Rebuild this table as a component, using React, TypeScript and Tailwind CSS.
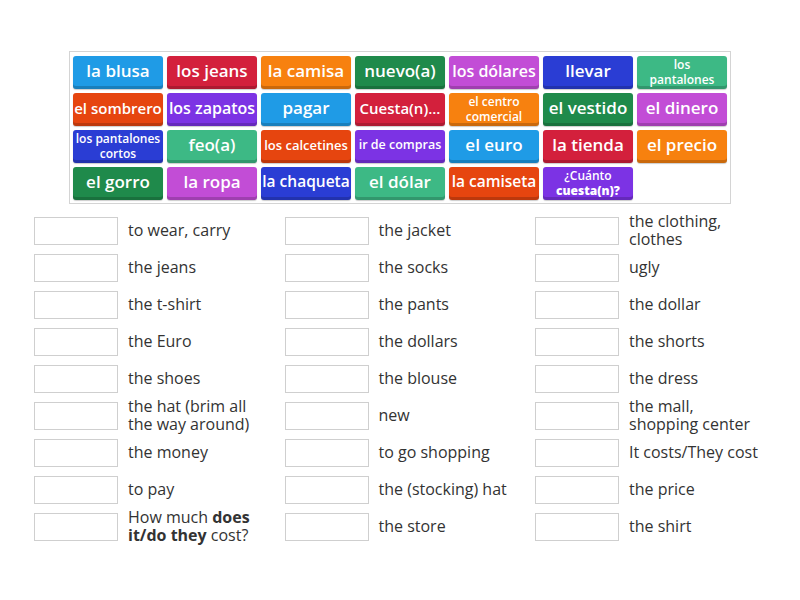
const palette = [
  'bg-[#1f9be6]',
  'bg-[#d3203c]',
  'bg-[#f7810f]',
  'bg-[#1f8a4b]',
  'bg-[#c24dd6]',
  'bg-[#2a3dd4]',
  'bg-[#3db985]',
  'bg-[#e6450f]',
  'bg-[#7c33e4]',
];

type Tile = { label: React.ReactNode; size: string };

const two = 'text-[12px] leading-[14px] pb-[1px]';

const tiles: Tile[] = [
  { label: 'la blusa', size: 'text-[17px] pb-[3px]' },
  { label: 'los jeans', size: 'text-[17px] pb-[3px]' },
  { label: 'la camisa', size: 'text-[17px] pb-[3px]' },
  { label: 'nuevo(a)', size: 'text-[17px] pb-[3px]' },
  { label: 'los dólares', size: 'text-[16px] pb-[3px]' },
  { label: 'llevar', size: 'text-[17px] pb-[3px]' },
  { label: <>los<br />pantalones</>, size: two },
  { label: 'el sombrero', size: 'text-[15px] pb-[3px]' },
  { label: 'los zapatos', size: 'text-[16px] pb-[3px]' },
  { label: 'pagar', size: 'text-[17px] pb-[3px]' },
  { label: 'Cuesta(n)...', size: 'text-[15px] pb-[3px]' },
  { label: <>el centro<br />comercial</>, size: two },
  { label: 'el vestido', size: 'text-[17px] pb-[3px]' },
  { label: 'el dinero', size: 'text-[17px] pb-[3px]' },
  { label: <>los pantalones<br />cortos</>, size: two },
  { label: 'feo(a)', size: 'text-[17px] pb-[3px]' },
  { label: 'los calcetines', size: 'text-[13px] pb-[3px]' },
  { label: 'ir de compras', size: 'text-[12.5px] pb-[3px]' },
  { label: 'el euro', size: 'text-[17px] pb-[3px]' },
  { label: 'la tienda', size: 'text-[17px] pb-[3px]' },
  { label: 'el precio', size: 'text-[17px] pb-[3px]' },
  { label: 'el gorro', size: 'text-[17px] pb-[3px]' },
  { label: 'la ropa', size: 'text-[17px] pb-[3px]' },
  { label: 'la chaqueta', size: 'text-[15.5px] pb-[3px]' },
  { label: 'el dólar', size: 'text-[17px] pb-[3px]' },
  { label: 'la camiseta', size: 'text-[15.5px] pb-[3px]' },
  {
    label: (
      <>
        ¿Cuánto
        <br />
        <span className="font-extrabold">cuesta(n)?</span>
      </>
    ),
    size: two,
  },
];

const columns: React.ReactNode[][] = [
  [
    'to wear, carry',
    'the jeans',
    'the t-shirt',
    'the Euro',
    'the shoes',
    <>the hat (brim all<br />the way around)</>,
    'the money',
    'to pay',
    <>How much <b className="font-bold">does</b><br /><b className="font-bold">it/do they</b> cost?</>,
  ],
  [
    'the jacket',
    'the socks',
    'the pants',
    'the dollars',
    'the blouse',
    'new',
    'to go shopping',
    'the (stocking) hat',
    'the store',
  ],
  [
    <>the clothing,<br />clothes</>,
    'ugly',
    'the dollar',
    'the shorts',
    'the dress',
    <>the mall,<br />shopping center</>,
    'It costs/They cost',
    'the price',
    'the shirt',
  ],
];

export default function App() {
  return (
    <div className="w-[800px] h-[600px] bg-white font-['Open_Sans',sans-serif] relative overflow-hidden">
      <div className="pt-[51px] pl-[69px]">
        <div className="w-[662px] border border-[#d4d4d4] px-[3px] pt-[4px] pb-[3px]">
          <div className="grid grid-cols-7 gap-x-[4px] gap-y-[4px]">
            {tiles.map((t, i) => (
              <div
                key={i}
                className={`${palette[i % 9]} h-[33px] rounded-[3px] flex items-center justify-center text-center text-white font-semibold whitespace-nowrap shadow-[inset_0_-3px_0_rgba(0,0,0,0.18),0_1px_1px_rgba(0,0,0,0.2)] ${t.size}`}
              >
                <span className="leading-tight">{t.label}</span>
              </div>
            ))}
          </div>
        </div>
      </div>

      <div className="flex pl-[34px] pt-[13px]">
        {columns.map((col, c) => (
          <div key={c} className="w-[250.5px] flex flex-col gap-[9px]">
            {col.map((txt, r) => (
              <div key={r} className="flex items-center h-[28px]">
                <div className="w-[84px] h-[28px] border border-[#cfcfcf] bg-white shrink-0" />
                <div className="ml-[10px] pb-[3px] text-[16px] leading-[18px] text-[#333333] whitespace-nowrap">
                  {txt}
                </div>
              </div>
            ))}
          </div>
        ))}
      </div>
    </div>
  );
}
